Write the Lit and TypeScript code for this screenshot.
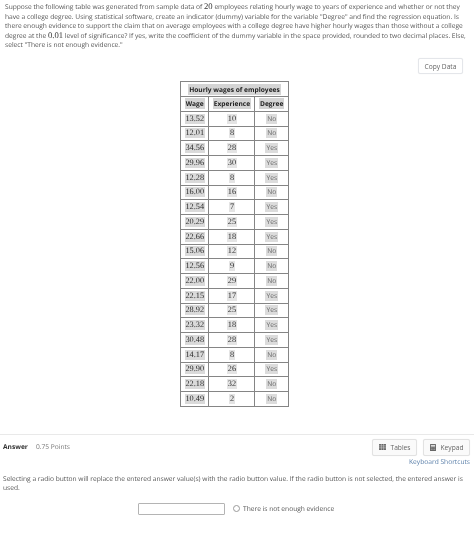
import { LitElement, html, css } from "lit";
import { customElement } from "lit/decorators.js";

const rows: [string, string, string][] = [
  ["13.52","10","No"],["12.01","8","No"],["34.56","28","Yes"],["29.96","30","Yes"],["12.28","8","Yes"],
  ["16.00","16","No"],["12.54","7","Yes"],["20.29","25","Yes"],["22.66","18","Yes"],["15.06","12","No"],
  ["12.56","9","No"],["22.00","29","No"],["22.15","17","Yes"],["28.92","25","Yes"],["23.32","18","Yes"],
  ["30.48","28","Yes"],["14.17","8","No"],["29.90","26","Yes"],["22.18","32","No"],["10.49","2","No"],
];

@customElement("app-root")
export class AppRoot extends LitElement {
  static styles = css`
    :host { display: block; width: 474px; height: 544px; overflow: hidden; background: #fff;
      font-family: "Open Sans", sans-serif; font-size: 6.65px; color: #555; text-rendering: geometricPrecision; filter: blur(0.3px); }
    .q { margin: 0; padding: 2px 5px 0 5px; line-height: 9.5px; font-size: 6.65px; white-space: nowrap; height: 46px; }
    .m { font-family: "Liberation Serif", serif; font-size: 8.6px; color: #333; }
    .copyrow { display: flex; justify-content: flex-end; padding: 10px 11px 0 0; }
    .btn { font: inherit; font-size: 6.65px; color: #666; background: #fff; border: 1px solid #e4e6ea; border-radius: 2px;
      box-shadow: 0 0 1px #e8e8e8; display: inline-flex; align-items: center; justify-content: center; gap: 5px; padding: 0; box-sizing: border-box; }
    .copy { width: 45px; height: 16px; }
    .tablewrap { display: flex; justify-content: center; padding: 7px 0 0 0; margin-left: -5px; }
    table { border-collapse: collapse; table-layout: fixed; width: 108px; }
    td, th { border: 1px solid #858585; padding: 0; text-align: center; height: 14.75px; box-sizing: border-box; }
    .c1 { width: 28.5px; } .c2 { width: 46px; } .c3 { width: 33.5px; }
    tr.title td { height: 15px; }
    .title span, th span { background: #d4d4d4; color: #222; font-weight: 700; font-size: 6.65px; padding: 1px 1px; }
    .n { font-family: "Liberation Serif", serif; font-size: 8.3px; color: #2a2a2a; background: #dadada; padding: 0 .5px; line-height: 10px; display: inline-block; }
    .n.plain { background: #e4e4e4; }
    .t { font-size: 6.65px; color: #666; background: #dcdcdc; padding: 0 1px; line-height: 10px; display: inline-block; }
    .answer { margin-top: 27px; border-top: 1px solid #e9e9e9; height: 38px; display: flex; padding: 4px 4px 0 3px; justify-content: space-between; box-sizing: border-box; }
    .al { display: flex; gap: 8px; align-items: baseline; padding-top: 3px; }
    .al b { color: #333; font-size: 6.65px; font-weight: 700; }
    .al span { color: #777; font-size: 6.65px; }
    .ar { display: flex; flex-direction: column; align-items: flex-end; }
    .btns { display: flex; gap: 6px; }
    .tb { height: 17px; background: #fafafa; border-color: #e2e2e2; }
    .tb1 { width: 45px; } .tb2 { width: 47px; }
    .kbd { color: #5c80aa; font-size: 6.65px; line-height: 9px; margin-top: 1px; }
    .note { margin: 0; padding: 2px 5px 0 3px; line-height: 9.5px; font-size: 6.65px; white-space: nowrap; }
    .entry { display: flex; align-items: center; padding: 10px 0 0 138px; gap: 8px; }
    .inp { width: 87px; height: 12px; border: 1px solid #b4b4b4; border-radius: 1px; box-sizing: border-box; background: #fff; }
    .radio { display: flex; align-items: center; gap: 3px; color: #555; font-size: 6.65px; }
    .dot { width: 5px; height: 5px; border: 1px solid #9a9a9a; border-radius: 50%; }
    svg { display: block; }
  `;

  render() {
    return html`
      <p class="q">Suppose the following table was generated from sample data of <span class="m">20</span> employees relating hourly wage to years of experience and whether or not they<br>have a college degree. Using statistical software, create an indicator (dummy) variable for the variable "Degree" and find the regression equation. Is<br>there enough evidence to support the claim that on average employees with a college degree have higher hourly wages than those without a college<br>degree at the <span class="m">0.01</span> level of significance? If yes, write the coefficient of the dummy variable in the space provided, rounded to two decimal places. Else,<br>select "There is not enough evidence."</p>
      <div class="copyrow"><button class="btn copy">Copy Data</button></div>
      <div class="tablewrap">
        <table>
          <colgroup><col class="c1"><col class="c2"><col class="c3"></colgroup>
          <tr class="title"><td colspan="3"><span>Hourly wages of employees</span></td></tr>
          <tr><th><span>Wage</span></th><th><span>Experience</span></th><th><span>Degree</span></th></tr>
          ${rows.map(r => html`<tr>
            <td><span class="n">${r[0]}</span></td>
            <td><span class="n plain">${r[1]}</span></td>
            <td><span class="t">${r[2]}</span></td>
          </tr>`)}
        </table>
      </div>
      <div class="answer">
        <div class="al"><b>Answer</b><span>0.75 Points</span></div>
        <div class="ar">
          <div class="btns">
            <button class="btn tb tb1">
              <svg width="7" height="6" viewBox="0 0 8 7"><rect width="8" height="7" fill="#666"/><path d="M0 2.2h8M0 4.5h8M2.7 0v7M5.3 0v7" stroke="#ddd" stroke-width=".6"/></svg>
              Tables
            </button>
            <button class="btn tb tb2">
              <svg width="6" height="7" viewBox="0 0 7 8"><rect width="7" height="8" rx=".6" fill="#666"/><rect x="1" y="1" width="5" height="2" fill="#ddd"/><path d="M1 4.5h5M1 6.3h5" stroke="#ccc" stroke-width=".8" stroke-dasharray="1 1"/></svg>
              Keypad
            </button>
          </div>
          <div class="kbd">Keyboard Shortcuts</div>
        </div>
      </div>
      <p class="note">Selecting a radio button will replace the entered answer value(s) with the radio button value. If the radio button is not selected, the entered answer is<br>used.</p>
      <div class="entry">
        <div class="inp"></div>
        <label class="radio"><span class="dot"></span>There is not enough evidence</label>
      </div>
    `;
  }
}
